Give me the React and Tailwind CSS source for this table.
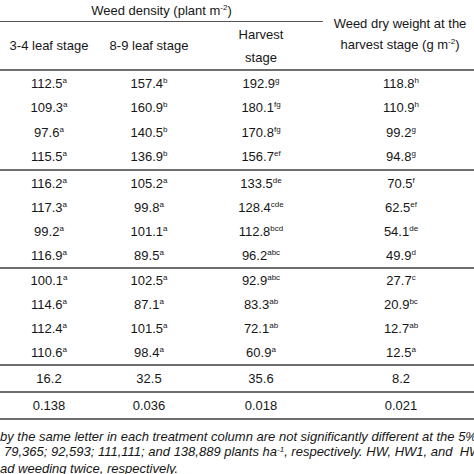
const groups = [
  {
    h: 'h-[24.5px]',
    rows: [
      [['112.5', 'a'], ['157.4', 'b'], ['192.9', 'g'], ['118.8', 'h']],
      [['109.3', 'a'], ['160.9', 'b'], ['180.1', 'fg'], ['110.9', 'h']],
      [['97.6', 'a'], ['140.5', 'b'], ['170.8', 'fg'], ['99.2', 'g']],
      [['115.5', 'a'], ['136.9', 'b'], ['156.7', 'ef'], ['94.8', 'g']],
    ],
  },
  {
    h: 'h-6',
    rows: [
      [['116.2', 'a'], ['105.2', 'a'], ['133.5', 'de'], ['70.5', 'f']],
      [['117.3', 'a'], ['99.8', 'a'], ['128.4', 'cde'], ['62.5', 'ef']],
      [['99.2', 'a'], ['101.1', 'a'], ['112.8', 'bcd'], ['54.1', 'de']],
      [['116.9', 'a'], ['89.5', 'a'], ['96.2', 'abc'], ['49.9', 'd']],
    ],
  },
  {
    h: 'h-[23.75px]',
    rows: [
      [['100.1', 'a'], ['102.5', 'a'], ['92.9', 'abc'], ['27.7', 'c']],
      [['114.6', 'a'], ['87.1', 'a'], ['83.3', 'ab'], ['20.9', 'bc']],
      [['112.4', 'a'], ['101.5', 'a'], ['72.1', 'ab'], ['12.7', 'ab']],
      [['110.6', 'a'], ['98.4', 'a'], ['60.9', 'a'], ['12.5', 'a']],
    ],
  },
  { h: 'h-[25px]', rows: [[['16.2'], ['32.5'], ['35.6'], ['8.2']]] },
  { h: 'h-[25px]', rows: [[['0.138'], ['0.036'], ['0.018'], ['0.021']]] },
];

const cols = 'grid grid-cols-[98px_102px_122px_152px]';

function Val({ v }) {
  return (
    <span className="whitespace-nowrap">
      {v[0]}
      {v[1] && <span className="relative -top-[5px] text-[8px]">{v[1]}</span>}
    </span>
  );
}

export default function App() {
  return (
    <div
      className="w-[474px] h-[474px] overflow-hidden bg-white text-[#161616] text-[13px] leading-none"
      style={{ fontFamily: '"Liberation Sans", Arial, sans-serif' }}
    >
      {/* header */}
      <div className={`${cols} grid-rows-[22px_47px] border-b-2 border-[#6e6e6e]`}>
        <div className="col-span-3 flex items-center justify-center border-b border-[#555] mr-[-1px]">
          <span>
            Weed density (plant m<span className="relative -top-[5px] text-[8px]">-2</span>)
          </span>
        </div>
        <div className="row-span-2 flex flex-col items-center justify-center leading-[21px] pl-[4px]">
          <span>Weed dry weight at the</span>
          <span>
            harvest stage (g m<span className="relative -top-[5px] text-[8px]">-2</span>)
          </span>
        </div>
        <div className="flex items-center justify-center">3-4 leaf stage</div>
        <div className="flex items-center justify-center">8-9 leaf stage</div>
        <div className="flex flex-col items-center justify-center leading-[23px]">
          <span>Harvest</span>
          <span>stage</span>
        </div>
      </div>

      {/* body */}
      {groups.map((g, gi) => (
        <div key={gi} className="border-b-2 border-[#6e6e6e]">
          {g.rows.map((r, ri) => (
            <div key={ri} className={`${cols} ${g.h} items-center`}>
              {r.map((v, ci) => (
                <div key={ci} className={`text-center ${ci === 3 ? 'pl-[6px]' : ''}`}>
                  <Val v={v} />
                </div>
              ))}
            </div>
          ))}
        </div>
      ))}

      {/* footnote */}
      <div className="pt-[9px] italic leading-[15px] whitespace-nowrap">
        <p>by the same letter in each treatment column are not significantly different at the 5% level</p>
        <p className="pl-[4px]">
          79,365; 92,593; 111,111; and 138,889 plants ha<span className="relative -top-[4px] text-[8px]">-1</span>,
          respectively. HW, HW1, and&nbsp; HW2 are hand
        </p>
        <p>ad weeding twice, respectively.</p>
      </div>
    </div>
  );
}
